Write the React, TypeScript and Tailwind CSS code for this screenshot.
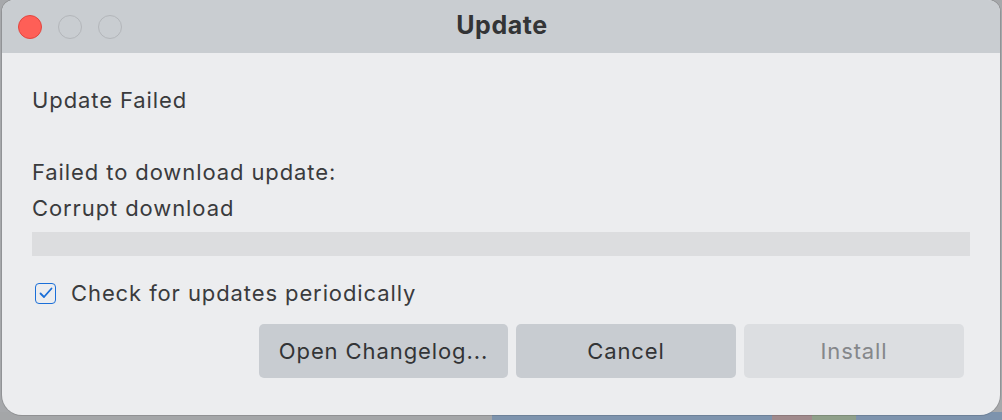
import React from 'react';

const font = { fontFamily: 'Inter, "Noto Sans", sans-serif' };

const TrafficLights: React.FC = () => (
  <div className="flex items-center gap-4 pl-[16px]">
    <span className="block w-[24px] h-[24px] rounded-full bg-[#fe5f57] border border-[#e2463f]" />
    <span className="block w-[24px] h-[24px] rounded-full border-[1.5px] border-[#b3b6ba]" />
    <span className="block w-[24px] h-[24px] rounded-full border-[1.5px] border-[#b3b6ba]" />
  </div>
);

export default function App() {
  return (
    <div className="w-[1002px] h-[420px] bg-[#a6a8ab] overflow-hidden relative" style={font}>
      <div className="absolute left-0 right-0 bottom-0 h-[8px] flex">
        <div className="w-[492px] bg-[#a4a6a8]" />
        <div className="w-[280px] bg-[#7d93ad]" />
        <div className="w-[40px] bg-[#a08a8c]" />
        <div className="w-[44px] bg-[#8fa08a]" />
        <div className="flex-1 bg-[#7d93ad]" />
      </div>
      <div className="relative ml-[2px] mr-[2px] h-[415px] rounded-t-[12px] rounded-b-[20px] bg-[#ecedef] overflow-hidden flex flex-col shadow-[0_0_0_1px_rgba(0,0,0,0.12)]">
        <div className="h-[53px] bg-[#c9cdd1] flex items-center relative">
          <TrafficLights />
          <div className="absolute inset-0 flex items-center justify-center text-[25px] font-bold tracking-[0.6px] text-[#333436] pl-[2px] pb-[2px]">
            Update
          </div>
        </div>
        <div className="flex flex-col px-[30px] text-[#3a3b3d] text-[22px] tracking-[0.9px]">
          <div className="mt-[33px] leading-[28px]">Update Failed</div>
          <div className="mt-[44px] leading-[28px]">Failed to download update:</div>
          <div className="mt-[8px] leading-[28px]">Corrupt download</div>
          <div className="mt-[10px] h-[24px] bg-[#dcdddf]" />
          <div className="mt-[23px] flex items-center gap-[15px] pl-[3px]">
            <span className="w-[21px] h-[21px] rounded-[4px] border-[1.5px] border-[#1b6fd8] flex items-center justify-center">
              <svg width="14" height="12" viewBox="0 0 14 12" fill="none">
                <path d="M1.5 6.5 L5 10 L12.5 1.5" stroke="#1b6fd8" strokeWidth="1.8" strokeLinecap="round" strokeLinejoin="round" />
              </svg>
            </span>
            <span className="leading-[28px]">Check for updates periodically</span>
          </div>
          <div className="mt-[17px] flex justify-end gap-[8px] pr-[6px]">
            <button className="w-[249px] h-[54px] rounded-[5px] bg-[#c8ccd1] text-[#333436]">Open Changelog...</button>
            <button className="w-[220px] h-[54px] rounded-[5px] bg-[#c8ccd1] text-[#333436]">Cancel</button>
            <button className="w-[220px] h-[54px] rounded-[5px] bg-[#dcdee1] text-[#85878a]">Install</button>
          </div>
        </div>
      </div>
    </div>
  );
}
